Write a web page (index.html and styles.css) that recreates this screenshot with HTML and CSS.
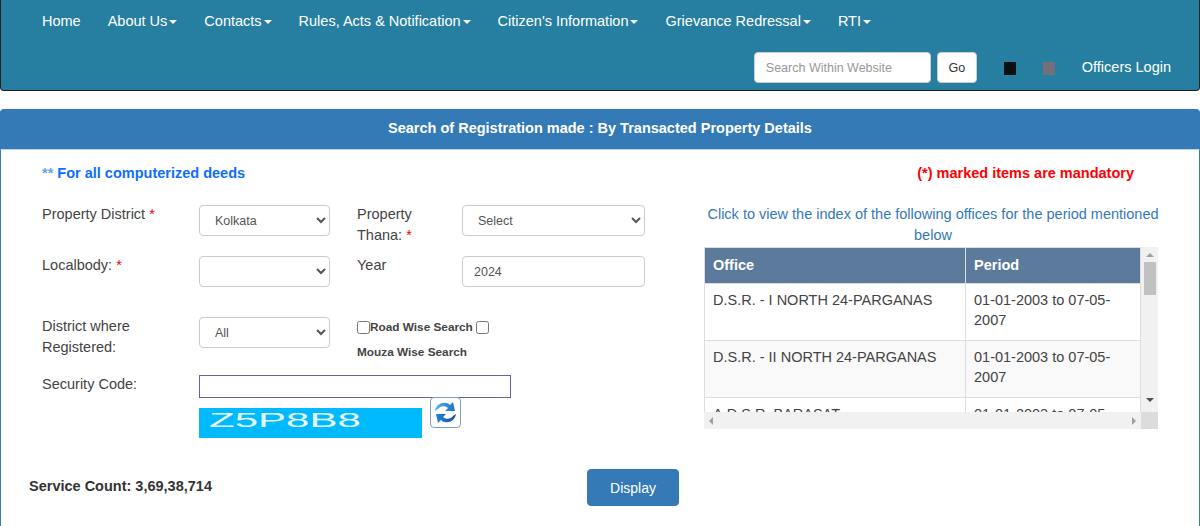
FILE: index.html
```html
<!DOCTYPE html>
<html lang="en">
<head>
<meta charset="utf-8">
<title>Search of Registration</title>
<link rel="stylesheet" href="styles.css">
</head>
<body>
<nav class="navbar">
  <ul class="menu">
    <li><a href="#">Home</a></li>
    <li><a href="#">About Us<span class="caret"></span></a></li>
    <li><a href="#">Contacts<span class="caret"></span></a></li>
    <li><a href="#">Rules, Acts &amp; Notification<span class="caret"></span></a></li>
    <li><a href="#">Citizen's Information<span class="caret"></span></a></li>
    <li><a href="#">Grievance Redressal<span class="caret"></span></a></li>
    <li><a href="#">RTI<span class="caret"></span></a></li>
  </ul>
  <div class="tools">
    <input class="search" type="text" placeholder="Search Within Website">
    <button class="go" type="button">Go</button>
    <span class="swatch swatch-black"></span>
    <span class="swatch swatch-grey"></span>
    <a class="login" href="#">Officers Login</a>
  </div>
</nav>

<section class="panel">
  <h1 class="panel-heading">Search of Registration made : By Transacted Property Details</h1>
  <div class="panel-body">
    <div class="notes">
      <span class="note-blue"><span class="note-stars">**</span> For all computerized deeds</span>
      <span class="note-red">(*) marked items are mandatory</span>
    </div>
    <div class="columns">
      <form class="form-grid">
        <label class="lbl">Property District <span class="req">*</span></label>
        <select class="ctl"><option>Kolkata</option></select>
        <label class="lbl lbl-narrow">Property Thana: <span class="req">*</span></label>
        <select class="ctl ctl-wide"><option>Select</option></select>

        <label class="lbl">Localbody: <span class="req">*</span></label>
        <select class="ctl"><option></option></select>
        <label class="lbl lbl-narrow">Year</label>
        <input class="ctl ctl-wide" type="text" value="2024">

        <label class="lbl">District where Registered:</label>
        <select class="ctl"><option>All</option></select>
        <div class="wise">
          <div class="wise-line"><input class="chk" type="checkbox"><span>Road Wise Search</span><input class="chk chk-gap" type="checkbox"></div>
          <div class="wise-second">Mouza Wise Search</div>
        </div>

        <label class="lbl">Security Code:</label>
        <div class="security">
          <input class="code" type="text">
          <div class="captcha-row">
            <div class="captcha"><span class="captcha-text">Z5P8B8</span></div>
            <button class="refresh" type="button" aria-label="Refresh">
              <svg width="27" height="27" viewBox="0 0 27 27">
                <defs>
                  <linearGradient id="arrow-top" x1="0" y1="0" x2="1" y2="0">
                    <stop offset="0" stop-color="#59b4f2"/>
                    <stop offset="1" stop-color="#1a6fc4"/>
                  </linearGradient>
                  <linearGradient id="arrow-bottom" x1="0" y1="0" x2="1" y2="0">
                    <stop offset="0" stop-color="#1f86e0"/>
                    <stop offset="1" stop-color="#174f96"/>
                  </linearGradient>
                </defs>
                <path d="M3 12C4 6 9 3 14 4c2 0 3 1 4 2l3-3 2 9-10 0 3-3c-3-3-8-2-10 1z" fill="url(#arrow-top)"/>
                <path d="M24 15c-1 6-6 9-11 8-2 0-3-1-4-2l-3 3-2-9 10 0-3 3c3 3 8 2 10-1z" fill="url(#arrow-bottom)"/>
              </svg>
            </button>
          </div>
        </div>
      </form>

      <aside class="offices">
        <p class="offices-title">Click to view the index of the following offices for the period mentioned below</p>
        <div class="scroller">
          <div class="viewport">
            <table class="office-table">
              <thead><tr><th class="c1">Office</th><th class="c2">Period</th></tr></thead>
              <tbody>
                <tr><td>D.S.R. - I NORTH 24-PARGANAS</td><td>01-01-2003 to 07-05-2007</td></tr>
                <tr><td>D.S.R. - II NORTH 24-PARGANAS</td><td>01-01-2003 to 07-05-2007</td></tr>
                <tr><td>A.D.S.R. BARASAT</td><td>01-01-2003 to 07-05-2007</td></tr>
              </tbody>
            </table>
          </div>
          <div class="vbar">
            <span class="arrow arrow-up"></span>
            <span class="thumb"></span>
            <span class="arrow arrow-down"></span>
          </div>
          <div class="hbar">
            <span class="arrow arrow-left"></span>
            <span class="arrow arrow-right"></span>
          </div>
          <div class="corner"></div>
        </div>
      </aside>
    </div>
    <div class="footer-row">
      <span class="count">Service Count: 3,69,38,714</span>
      <button class="display" type="button">Display</button>
    </div>
  </div>
</section>
</body>
</html>
```
FILE: styles.css
```css
* { box-sizing: border-box; }
html, body { height: 526px; overflow: hidden; }
body {
  margin: 0;
  background: #fff;
  color: #333;
  font: 14.5px/20px "Liberation Sans", Arial, sans-serif;
}
a { color: inherit; text-decoration: none; }

.navbar {
  height: 91px;
  background: #267fa1;
  border: 1px solid #1b1f22;
  border-top: 0;
  border-radius: 0 0 4px 4px;
  color: #fff;
  display: flex;
  flex-direction: column;
}
.menu {
  display: flex;
  list-style: none;
  margin: 0;
  padding: 11px 0 0 41px;
  gap: 27px;
  height: 52px;
}
.caret {
  display: inline-block;
  margin-left: 2px;
  vertical-align: middle;
  border-top: 4px solid #fff;
  border-left: 4px solid transparent;
  border-right: 4px solid transparent;
}
.tools {
  display: flex;
  align-items: center;
  justify-content: flex-end;
  padding-right: 28px;
  height: 31px;
}
.search {
  width: 177px;
  height: 31px;
  padding: 0 11px;
  border: 1px solid #ccc;
  border-radius: 4px;
  font: 12.5px "Liberation Sans", Arial, sans-serif;
}
.search::placeholder { color: #999; opacity: 1; }
.go {
  width: 40px;
  height: 31px;
  margin-left: 6px;
  background: #fff;
  border: 1px solid #ccc;
  border-radius: 4px;
  color: #333;
  font: 12.5px "Liberation Sans", Arial, sans-serif;
  padding: 0;
}
.swatch { width: 12px; height: 13px; margin-top: 2px; }
.swatch-black { background: #0b0f12; margin-left: 27px; }
.swatch-grey { background: #74707a; margin-left: 27px; }
.login { margin-left: 27px; margin-top: -1px; }

.panel { margin-top: 18px; }
.panel-heading {
  margin: 0;
  height: 41px;
  background: #337ab7;
  border: 1px solid #337ab7;
  border-bottom: 1px solid #b9d2e8;
  border-radius: 4px 4px 0 0;
  color: #fff;
  font-size: 14.5px;
  font-weight: 700;
  line-height: 37px;
  text-align: center;
}
.panel-body {
  border-left: 1px solid #337ab7;
  border-right: 1px solid #337ab7;
  height: 376px;
}
.notes {
  display: flex;
  justify-content: space-between;
  padding: 13px 65px 0 41px;
  height: 55px;
  font-weight: 700;
}
.note-blue { color: #0d6efd; }
.note-stars { color: #6aa5e8; }
.note-red { color: #f00; }

.columns {
  display: flex;
  height: 264px;
}
.form-grid {
  display: grid;
  grid-template-columns: 157px 158px 105px 183px;
  grid-template-rows: 51px 61px 58px auto;
  padding-left: 41px;
  width: 703px;
  align-content: start;
}
.lbl {
  display: block;
  color: #444;
  line-height: 21px;
  margin-top: -1px;
}
.lbl-narrow { padding-right: 8px; }
.req { color: #e00; }
.ctl {
  height: 31px;
  width: 131px;
  padding: 0 11px;
  background: #fff;
  border: 1px solid #ccc;
  border-radius: 4px;
  color: #555;
  font: 12.5px "Liberation Sans", Arial, sans-serif;
}
.ctl-wide { width: 183px; }
.wise {
  grid-column: 3 / 5;
  font-size: 11.8px;
  font-weight: 700;
  color: #444;
  line-height: 14px;
}
.wise-line { display: flex; align-items: center; height: 20px; }
.chk { margin: 0; width: 13px; height: 13px; }
.chk-gap { margin-left: 3px; }
.wise-second { margin-top: 8px; }
.security { grid-column: 2 / 5; }
.code {
  display: block;
  width: 312px;
  height: 23px;
  margin: 0;
  border: 1px solid #6a5ea8;
  background: #fff;
}
.captcha-row { display: flex; align-items: flex-start; }
.captcha {
  width: 223px;
  height: 30px;
  margin-top: 10px;
  background: #00baff;
  overflow: hidden;
  padding: 0 0 0 10px;
}
.captcha-text {
  display: block;
  transform: scaleX(2.1);
  transform-origin: left center;
  color: #e8f8ff;
  font-size: 20px;
  line-height: 24px;
}
.refresh {
  width: 31px;
  height: 31px;
  margin: -1px 0 0 8px;
  padding: 1px;
  background: #fff;
  border: 1px solid #7d9fc6;
  border-radius: 4px;
}
.refresh svg { display: block; margin: auto; }

.offices { width: 458px; margin-top: -1px; }
.offices-title {
  margin: 0 0 1px;
  color: #337ab7;
  text-align: center;
  line-height: 21px;
}
.scroller {
  width: 454px;
  height: 182px;
  display: grid;
  grid-template-columns: 437px 17px;
  grid-template-rows: 165px 17px;
  background: #f1f1f1;
}
.viewport { overflow: hidden; background: #fff; }
.vbar {
  display: flex;
  flex-direction: column;
  align-items: center;
  padding-top: 6px;
}
.thumb { width: 12px; height: 33px; margin-top: 5px; background: #c1c1c1; }
.hbar {
  display: flex;
  align-items: center;
  justify-content: space-between;
  padding: 0 5px;
}
.corner { background: #dcdcdc; }
.arrow { width: 0; height: 0; border: 4px solid transparent; }
.arrow-up { border-top: 0; border-bottom-color: #a0a0a0; }
.arrow-down { border-bottom: 0; border-top-color: #505050; margin-top: 103px; }
.arrow-left { border-left: 0; border-right-color: #a0a0a0; }
.arrow-right { border-right: 0; border-left-color: #a0a0a0; }

.office-table {
  width: 437px;
  border-collapse: collapse;
  table-layout: fixed;
  background: #fff;
}
.office-table th, .office-table td {
  border: 1px solid #ddd;
  padding: 6px 8px 10px;
  text-align: left;
  vertical-align: top;
}
.office-table td { color: #444; }
.office-table th {
  background: #5c7a9c;
  color: #fff;
  font-weight: 700;
  height: 36px;
  padding: 7px 8px;
}
.c1 { width: 261px; }
.office-table tbody tr:nth-child(even) td { background: #f9f9f9; }

.footer-row {
  display: flex;
  align-items: flex-start;
  padding: 0 0 0 28px;
}
.count { font-weight: 700; margin-top: 7px; width: 558px; }
.display {
  width: 92px;
  height: 37px;
  margin-top: 0;
  background: #337ab7;
  border: 1px solid #337ab7;
  border-radius: 4px;
  color: #fff;
  font: 14px "Liberation Sans", Arial, sans-serif;
}
```
